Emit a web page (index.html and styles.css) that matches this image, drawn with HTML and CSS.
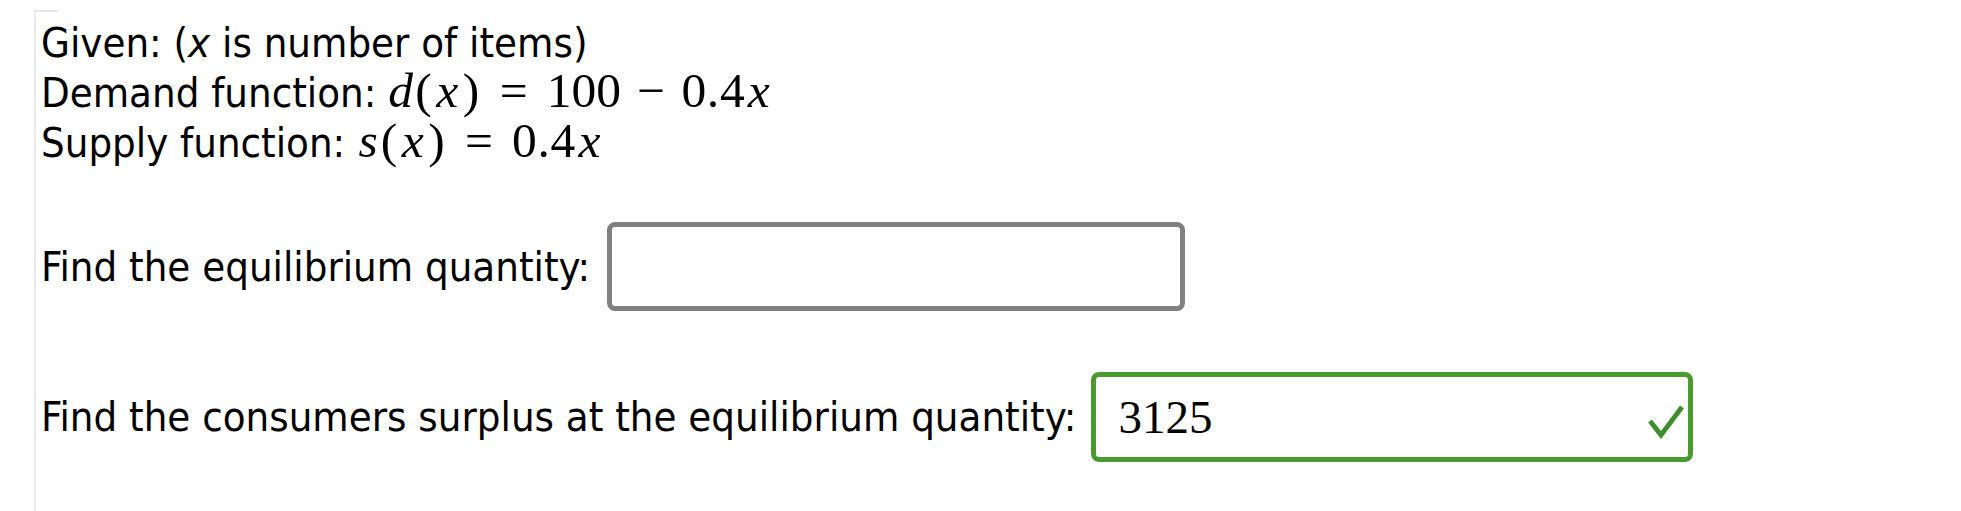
FILE: index.html
```html
<!DOCTYPE html>
<html>
<head>
<meta charset="utf-8">
<link rel="stylesheet" href="styles.css">
</head>
<body>
<div class="page">
  <div class="problem">
    <div class="given">
      <div class="line">Given: (<i>x</i> is number of items)</div>
      <div class="line">Demand function: <span class="math"><i class="mi-d">d</i><span class="p">(</span><i class="mi-x">x</i><span class="p">)</span><span class="rel">=</span>100<span class="bin">−</span>0<span class="dot">.</span>4<i class="mi-x">x</i></span></div>
      <div class="line">Supply function: <span class="math"><i class="mi-s">s</i><span class="p">(</span><i class="mi-x">x</i><span class="p">)</span><span class="rel">=</span>0<span class="dot">.</span>4<i class="mi-x">x</i></span></div>
    </div>
    <div class="q q1">
      <span class="label">Find the equilibrium quantity:</span>
      <span class="answer answer-empty"></span>
    </div>
    <div class="q q2">
      <span class="label">Find the consumers surplus at the equilibrium quantity:</span>
      <span class="answer answer-correct">
        <span class="value">3125</span>
        <svg class="check" width="38" height="38" viewBox="0 0 38 38"><polyline points="3,19 14,33 35,5" fill="none" stroke="#3e8e2c" stroke-width="4.8"/></svg>
      </span>
    </div>
  </div>
</div>
</body>
</html>
```
FILE: styles.css
```css
html, body { margin: 0; padding: 0; background: #fff; }
.page {
  padding: 10px 0 0 34px;
}
.problem {
  border-left: 2px solid #ececec;
  height: 501px;
  box-sizing: border-box;
  font-family: "DejaVu Sans Condensed", "DejaVu Sans", sans-serif;
  font-size: 41.5px;
  color: #000;
}
.problem::before {
  content: "";
  display: block;
  width: 24px;
  height: 2px;
  margin-left: -2px;
  background: #e6e6e6;
}
.given { padding-left: 5px; padding-top: 6px; }
.line { height: 50px; line-height: 50px; white-space: nowrap; }
.math {
  font-family: "Liberation Serif", serif;
  font-size: 49.5px;
  line-height: 0;
}
.math i { font-style: italic; }
.math .mi-x { padding: 0 0.064em; }
.math .mi-d { padding-right: 0.02em; }
.math .mi-s { padding: 0 0.03em; }
.math .p { padding: 0 0.028em; }
.math .dot { padding: 0 0.014em; }
.math .rel { margin: 0 0.385em; }
.math .bin { margin: 0 0.329em; }
.q { display: flex; align-items: center; white-space: nowrap; padding-left: 5px; line-height: 50px; }
.q1 { margin-top: 54px; }
.q2 { margin-top: 61px; }
.label { margin-right: 15px; }
.q1 .label { margin-right: 17px; }
.answer {
  display: flex;
  align-items: center;
  box-sizing: border-box;
  border-radius: 8px;
}
.answer-empty {
  width: 578px;
  height: 89px;
  border: 5px solid #808080;
}
.answer-correct {
  width: 602px;
  height: 90px;
  border: 5px solid #4a9a30;
  padding: 0 3px 0 22px;
  justify-content: space-between;
}
.value {
  font-family: "Liberation Serif", serif;
  font-size: 47px;
  line-height: 1;
}
.check { margin-top: 8px; }
```
